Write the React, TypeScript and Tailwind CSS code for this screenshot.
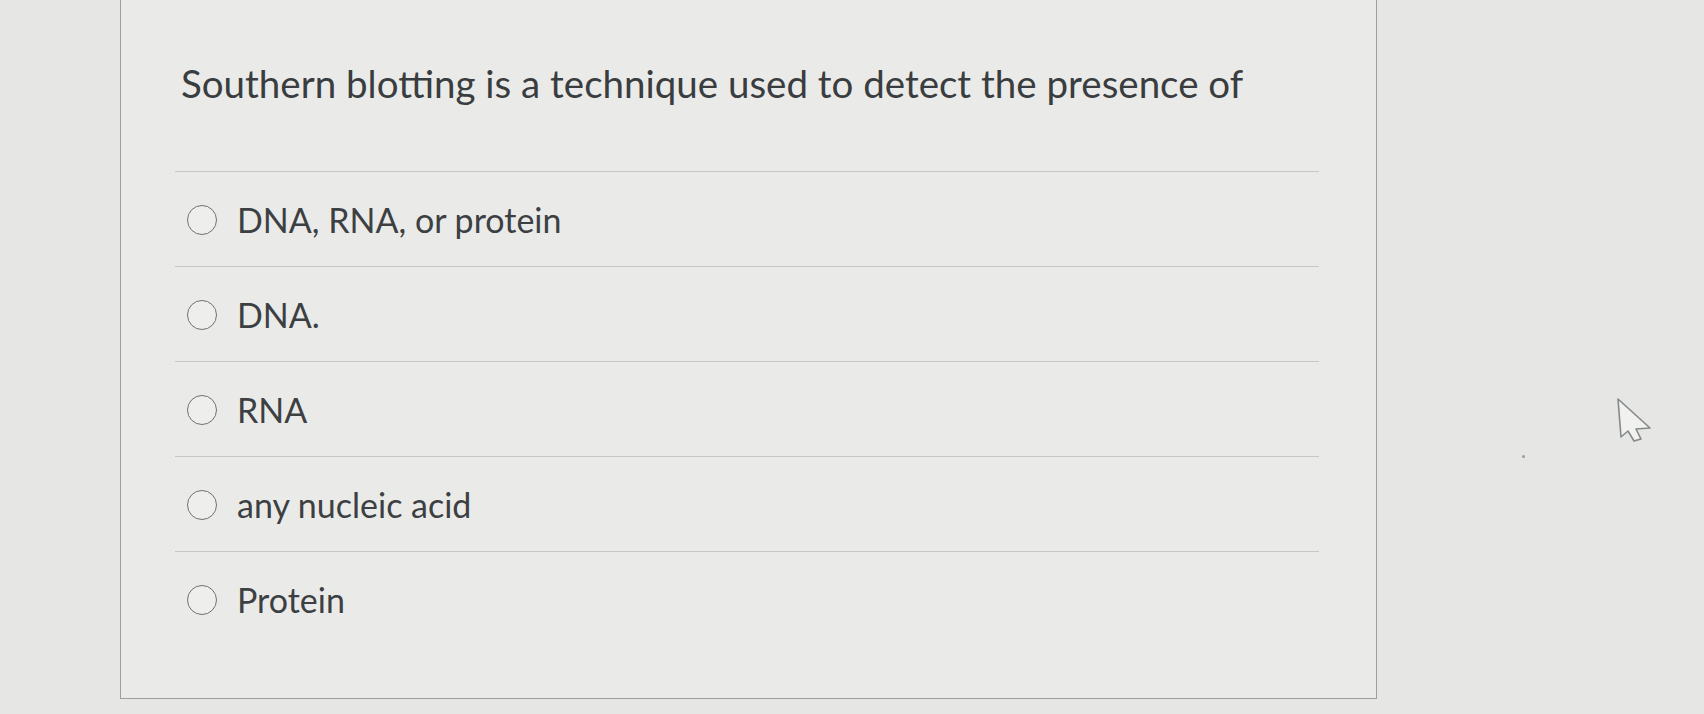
import React from "react";

const options = ["DNA, RNA, or protein", "DNA.", "RNA", "any nucleic acid", "Protein"];

export default function App() {
  return (
    <div
      className="relative h-[714px] w-[1704px] overflow-hidden bg-[#e6e7e5]"
      style={{ fontFamily: "Lato, 'Noto Sans', sans-serif" }}
    >
      <div className="ml-[120px] h-[699px] w-[1257px] border-x border-b border-[#9ea0a0] bg-[#eaebe9] pt-[60px]">
        <div className="pl-[60px] text-[38.5px] leading-[46px] text-[#3a3d40]">
          Southern blotting is a technique used to detect the presence of
        </div>
        <div className="ml-[54px] mr-[57px] mt-[65px] flex flex-col">
          {options.map((o) => (
            <div
              key={o}
              className="flex h-[95px] items-start border-t border-[#c6c8c7] pl-[12px] pt-[28px]"
            >
              <div className="flex h-[40px] items-center">
                <span className="block h-[30px] w-[30px] rounded-full border-[1.5px] border-[#6e7173] bg-[#eeefed]" />
              </div>
              <span className="ml-[20px] text-[34px] leading-[40px] text-[#3d4043]">{o}</span>
            </div>
          ))}
        </div>
      </div>
      <svg
        className="absolute left-[1616px] top-[397px]"
        width="36"
        height="46"
        viewBox="-2 -2 36 46"
      >
        <polygon
          points="0,0 3,38 10,32 16,42 23,40 18,30 32,29"
          fill="#f1f2f0"
          stroke="#85898a"
          strokeWidth="1.6"
          strokeLinejoin="round"
        />
      </svg>
      <span className="absolute left-[1522px] top-[455px] h-[3px] w-[3px] rounded-full bg-[#9a9c9c]" />
    </div>
  );
}
